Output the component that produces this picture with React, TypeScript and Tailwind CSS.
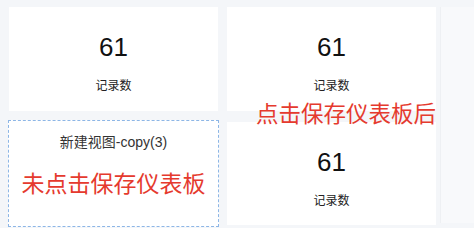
import React from 'react'

const font = { fontFamily: '"Liberation Sans", "Noto Sans CJK SC", sans-serif' }

function StatCard({ value, label }: { value: string; label: string }) {
  return (
    <div className="bg-white flex flex-col items-center pt-[27px]">
      <div className="text-[26px] leading-none text-[#111]">{value}</div>
      <div className="mt-[19px] text-[12px] leading-[14px] text-[#222]">{label}</div>
    </div>
  )
}

export default function App() {
  return (
    <div
      className="relative w-[474px] h-[228px] overflow-hidden bg-[#f4f6f9]"
      style={font}
    >
      <div className="grid grid-cols-[209px_209px_36px] grid-rows-[104px_103px] gap-x-[9px] gap-y-[11px] pl-[9px] pt-[7px]">
        <StatCard value="61" label="记录数" />
        <StatCard value="61" label="记录数" />
        <div className="row-span-2 bg-[#f8f9fb] border-l border-[#eef0f3] -ml-[5px] mb-[2px]" />
        {/* selected, unsaved card */}
        <div className="bg-white -mx-[1px] -mt-[2px] -mb-[2px] border border-dashed border-[#8db6e6] flex flex-col items-center pt-[12px]">
          <div className="text-[14px] leading-[18px] text-[#333]">新建视图-copy(3)</div>
          <div className="mt-[20px] text-[23px] leading-[26px] text-[#e53a2e]">未点击保存仪表板</div>
        </div>
        <StatCard value="61" label="记录数" />
      </div>
      <div className="absolute left-[256px] top-[102px] text-[22.5px] leading-[26px] text-[#e53a2e]">
        点击保存仪表板后
      </div>
    </div>
  )
}
